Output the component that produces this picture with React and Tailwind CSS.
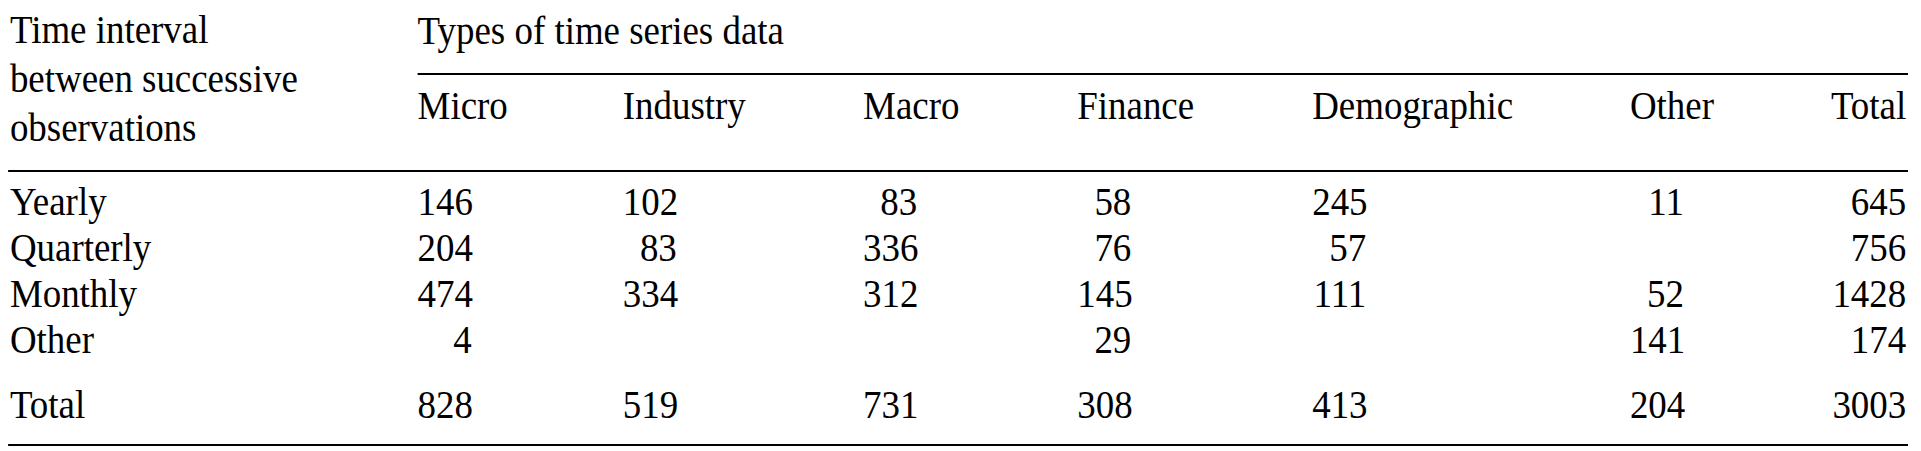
import React from 'react';

// columns (unscaled px) — the whole table is squeezed with scale-x-90 to get the narrow typeface look
const columns = ['Micro', 'Industry', 'Macro', 'Finance', 'Demographic', 'Other'];

const rows = [
  { label: 'Yearly', values: ['146', '102', '83', '58', '245', '11'], total: '645' },
  { label: 'Quarterly', values: ['204', '83', '336', '76', '57', ''], total: '756' },
  { label: 'Monthly', values: ['474', '334', '312', '145', '111', '52'], total: '1428' },
  { label: 'Other', values: ['4', '', '', '29', '', '141'], total: '174' },
];

const totals = { label: 'Total', values: ['828', '519', '731', '308', '413', '204'], total: '3003' };

const grid = 'grid grid-cols-[455px_228px_267px_238px_261px_353px_200px_1fr]';

const DataRow = ({ row, className = '' }) => (
  <div className={`${grid} leading-[46px] ${className}`}>
    <div className="pl-[2px]">{row.label}</div>
    {row.values.map((v, i) => (
      <div key={i}>
        <div className="w-[60px] text-right">{v}</div>
      </div>
    ))}
    <div className="text-right pr-[2px]">{row.total}</div>
  </div>
);

const App = () => {
  return (
    <div className="w-full overflow-hidden bg-white text-black">
      <div className="w-[2134px] origin-left scale-x-90 font-['Liberation_Serif','Times_New_Roman',serif] text-[41px]">
        <div className="ml-[9px] w-[2111px]">
          {/* Header */}
          <div className={`${grid} border-b-2 border-black`}>
            <div className="row-span-2 pl-[2px] pt-[5px] leading-[49px]">
              Time interval
              <br />
              between successive
              <br />
              observations
            </div>
            <div className="col-span-7 border-b-2 border-black pt-[7px] pb-[20px] leading-[46px]">
              Types of time series data
            </div>
            {columns.map((c) => (
              <div key={c} className="pt-[7px] pb-[42px] leading-[46px]">{c}</div>
            ))}
            <div className="pt-[7px] pb-[42px] leading-[46px] text-right pr-[2px]">Total</div>
          </div>

          {/* Body */}
          <div className="border-b-2 border-black pt-[6px] pb-[17px]">
            {rows.map((r) => (
              <DataRow key={r.label} row={r} />
            ))}
            <DataRow row={totals} className="mt-[19px]" />
          </div>
        </div>
      </div>
    </div>
  );
};

export default App;
